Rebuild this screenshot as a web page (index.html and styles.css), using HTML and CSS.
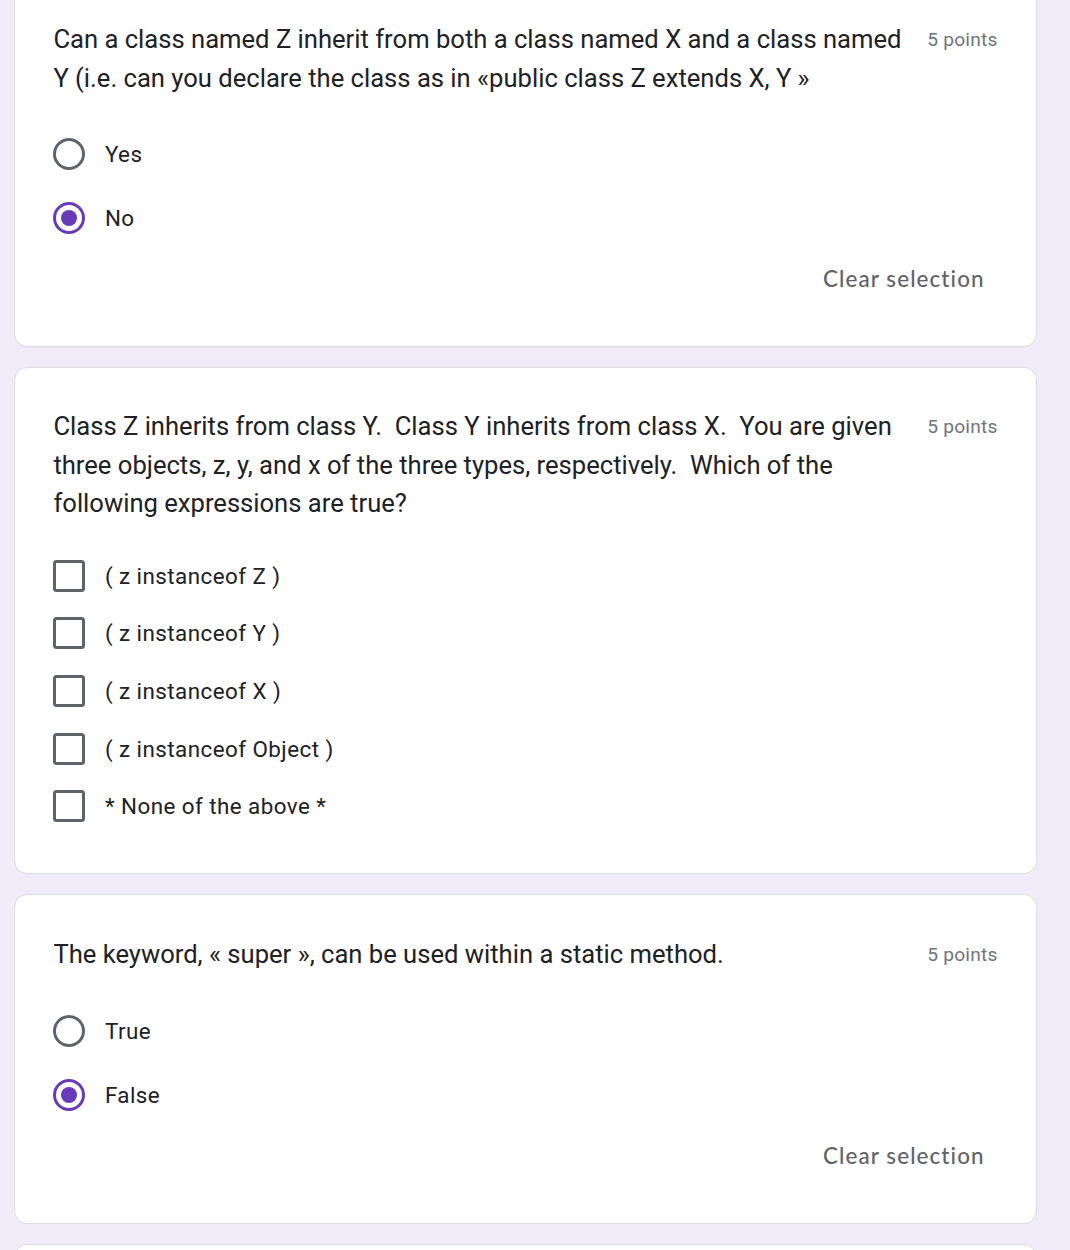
FILE: index.html
```html
<!DOCTYPE html>
<html>
<head>
<meta charset="utf-8">
<link rel="stylesheet" href="styles.css">
</head>
<body>
<div class="page">
  <div class="card">
    <div class="head">
      <div class="title">Can a class named Z inherit from both a class named X and a class named Y (i.e. can you declare the class as in «public class Z extends X, Y »</div>
      <div class="points">5 points</div>
    </div>
    <div class="options">
      <div class="opt"><span class="radio"></span><span class="label">Yes</span></div>
      <div class="opt"><span class="radio checked"></span><span class="label">No</span></div>
    </div>
    <div class="actions"><span class="clear">Clear selection</span></div>
  </div>

  <div class="card">
    <div class="head">
      <div class="title">Class Z inherits from class Y.&nbsp; Class Y inherits from class X.&nbsp; You are given three objects, z, y, and x of the three types, respectively.&nbsp; Which of the following expressions are true?</div>
      <div class="points">5 points</div>
    </div>
    <div class="options">
      <div class="opt check"><span class="box"></span><span class="label">( z instanceof Z )</span></div>
      <div class="opt check"><span class="box"></span><span class="label">( z instanceof Y )</span></div>
      <div class="opt check"><span class="box"></span><span class="label">( z instanceof X )</span></div>
      <div class="opt check"><span class="box"></span><span class="label">( z instanceof Object )</span></div>
      <div class="opt check"><span class="box"></span><span class="label">* None of the above *</span></div>
    </div>
  </div>

  <div class="card">
    <div class="head">
      <div class="title">The keyword, « super », can be used within a static method.</div>
      <div class="points">5 points</div>
    </div>
    <div class="options">
      <div class="opt"><span class="radio"></span><span class="label">True</span></div>
      <div class="opt"><span class="radio checked"></span><span class="label">False</span></div>
    </div>
    <div class="actions"><span class="clear">Clear selection</span></div>
  </div>

  <div class="card stub"></div>
</div>
</body>
</html>
```

FILE: styles.css
```css
html, body {
  margin: 0;
  padding: 0;
  background: #f0ebf8;
}
body {
  font-family: Roboto, "Liberation Sans", Arial, sans-serif;
  color: #202124;
  overflow: hidden;
  height: 1250px;
}
.page {
  width: 1023px;
  margin: -20px 0 0 14px;
  display: flex;
  flex-direction: column;
  gap: 20px;
}
.card {
  box-sizing: border-box;
  background: #fff;
  border: 1px solid #dadce0;
  border-radius: 13px;
  padding: 38.4px;
}
.card.stub {
  height: 200px;
}
.head {
  display: flex;
  align-items: flex-start;
}
.title {
  flex: 1;
  font-size: 25.6px;
  line-height: 38.4px;
  letter-spacing: 0;
  padding-top: 1px;
}
.points {
  margin-left: 20px;
  padding-top: 2px;
  font-size: 19.2px;
  line-height: 38.4px;
  letter-spacing: 0.2px;
  color: #70757a;
  white-space: nowrap;
}
.options {
  margin-top: 24.6px;
  display: flex;
  flex-direction: column;
}
.opt {
  height: 64px;
  display: flex;
  align-items: center;
}
.opt.check {
  height: 57.6px;
}
.label {
  margin-left: 19.5px;
  font-size: 22.4px;
  line-height: 32px;
  letter-spacing: 0.45px;
}
.radio {
  box-sizing: border-box;
  width: 32px;
  height: 32px;
  border: 3.2px solid #5f6368;
  border-radius: 50%;
  display: flex;
  align-items: center;
  justify-content: center;
  flex: none;
}
.radio.checked {
  border-color: #673ab7;
}
.radio.checked::after {
  content: "";
  width: 16px;
  height: 16px;
  border-radius: 50%;
  background: #673ab7;
}
.box {
  box-sizing: border-box;
  width: 32px;
  height: 32px;
  border: 3.2px solid #5f6368;
  border-radius: 3.5px;
  flex: none;
}
.actions {
  display: flex;
  justify-content: flex-end;
  height: 57.6px;
  align-items: center;
}
.clear {
  padding: 0 13px;
  font-family: Lato, "Open Sans", sans-serif;
  font-weight: 500;
  font-size: 22.4px;
  letter-spacing: 1.1px;
  color: #5f6368;
}
```
